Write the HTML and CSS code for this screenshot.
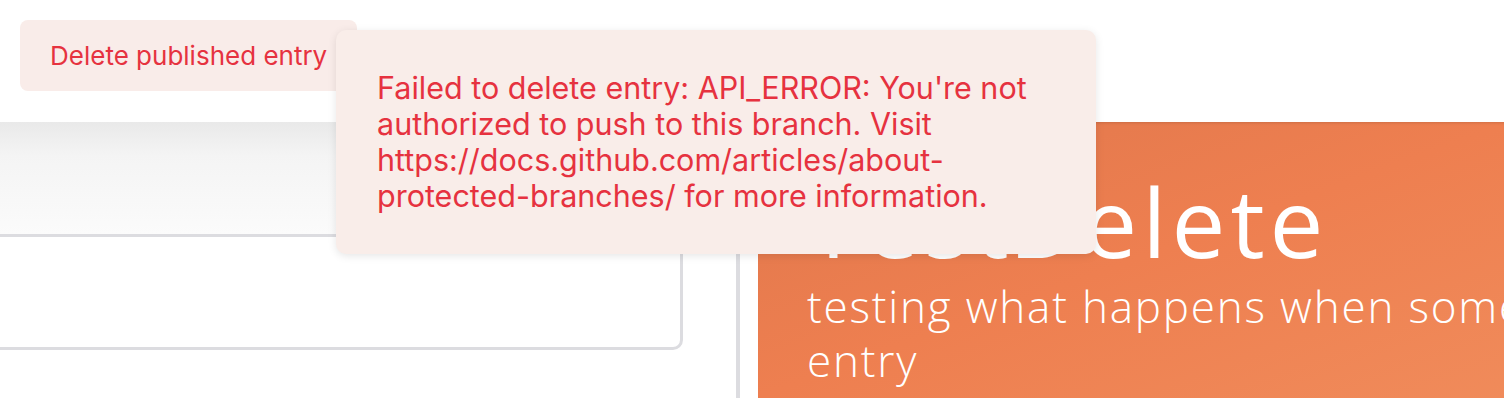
FILE: index.html
```html
<!DOCTYPE html>
<html lang="en">
<head>
    <meta charset="UTF-8">
    <meta name="viewport" content="width=device-width, initial-scale=1.0">
    <title>Test Delete</title>
    <link rel="stylesheet" href="styles.css">
</head>
<body>
    <div class="toolbar">
        <button class="btn-delete">Delete published entry</button>
    </div>
    <div class="workspace">
        <div class="editor">
            <div class="editor-header"></div>
            <div class="editor-field"></div>
        </div>
        <div class="divider"></div>
        <div class="preview">
            <div class="hero">
                <h1>Test Delete</h1>
                <p>testing what happens when someone deletes a published entry</p>
            </div>
        </div>
    </div>
    <div class="toast">
        Failed to delete entry: API_ERROR: You're not authorized to push to this branch. Visit https://docs.github.com/articles/about-protected-branches/ for more information.
    </div>
</body>
</html>
```

FILE: styles.css
```css
body {
    font-family: Inter, "Liberation Sans", Arial, sans-serif;
    margin: 0;
    padding: 0;
    background-color: #fff;
    overflow: hidden;
    height: 398px;
    position: relative;
}
.toolbar {
    height: 122px;
    padding: 20px;
    box-sizing: border-box;
}
.btn-delete {
    height: 71px;
    padding: 0 30px;
    border: none;
    border-radius: 8px;
    background-color: #f9ece9;
    color: #e6323f;
    font-family: inherit;
    font-size: 26px;
    cursor: pointer;
}
.workspace {
    display: flex;
    height: 276px;
}
.editor {
    width: 703px;
    margin-left: -20px;
    flex-shrink: 0;
}
.editor-header {
    height: 112px;
    background: linear-gradient(#e9e9e9, #f4f4f4 30%, #fbfbfb);
}
.editor-field {
    height: 110px;
    border: 3px solid #dcdce0;
    border-bottom-right-radius: 10px;
    background-color: #fff;
}
.divider {
    width: 4px;
    margin-left: 53px;
    margin-right: 18px;
    background-color: #dcdce0;
    flex-shrink: 0;
}
.preview {
    flex: 1;
    min-width: 0;
}
.hero {
    width: 1400px;
    height: 100%;
    padding: 0 49px;
    box-sizing: border-box;
    color: #fff;
    font-family: "Open Sans", sans-serif;
    font-weight: 300;
    background: linear-gradient(160deg, #e0774c, #ee7f50 35%, #f29563);
    box-shadow: inset 0 3px 3px -2px rgba(0,0,0,0.12);
    overflow: hidden;
}
.hero h1 {
    margin: 0;
    padding-top: 44px;
    font-size: 96px;
    font-weight: 400;
    line-height: 110px;
    letter-spacing: 5px;
    word-spacing: -35px;
    white-space: nowrap;
}
.hero p {
    margin: 3px 0 0;
    width: 1290px;
    font-size: 44px;
    line-height: 54px;
    letter-spacing: 1.8px;
}
.toast {
    position: absolute;
    top: 30px;
    left: 336px;
    width: 760px;
    box-sizing: border-box;
    padding: 40px 41px;
    border-radius: 10px;
    background-color: #f9ede9;
    color: #e6323f;
    font-size: 30.5px;
    line-height: 36px;
    box-shadow: 0 2px 8px rgba(0,0,0,0.1);
}
```
